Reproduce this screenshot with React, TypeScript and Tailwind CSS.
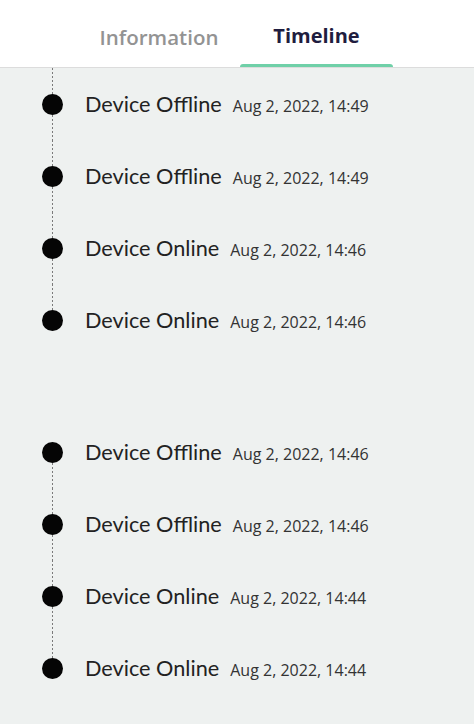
import React from "react";

type Item = { title: string; date: string };

const group1: Item[] = [
  { title: "Device Offline", date: "Aug 2, 2022, 14:49" },
  { title: "Device Offline", date: "Aug 2, 2022, 14:49" },
  { title: "Device Online", date: "Aug 2, 2022, 14:46" },
  { title: "Device Online", date: "Aug 2, 2022, 14:46" },
];
const group2: Item[] = [
  { title: "Device Offline", date: "Aug 2, 2022, 14:46" },
  { title: "Device Offline", date: "Aug 2, 2022, 14:46" },
  { title: "Device Online", date: "Aug 2, 2022, 14:44" },
  { title: "Device Online", date: "Aug 2, 2022, 14:44" },
];

const lineCls =
  "w-px flex-1 bg-[linear-gradient(#7a7a7a_50%,transparent_50%)] bg-[length:1px_4px]";

function Row({ item, top, bottom }: { item: Item; top: boolean; bottom: boolean }) {
  return (
    <div className="flex h-[72px] items-stretch">
      <div className="ml-[42px] flex w-[21px] flex-col items-center">
        <div className={top ? lineCls : "flex-1"} />
        <div className="h-[21px] w-[21px] rounded-full bg-[#050505]" />
        <div className={bottom ? lineCls : "flex-1"} />
      </div>
      <div className="ml-[22px] flex items-center">
        <div className="flex items-baseline gap-[11px]">
          <span className="text-[21.7px] font-normal text-[#222] [font-family:Lato,sans-serif]">{item.title}</span>
          <span className="text-[16px] text-[#333] [font-family:'Open_Sans',sans-serif]">{item.date}</span>
        </div>
      </div>
    </div>
  );
}

export default function App() {
  return (
    <div className="flex h-[724px] w-[474px] flex-col overflow-hidden bg-[#eef1f0]">
      <div className="flex h-[68px] shrink-0 border-b border-[#dcdcdc] bg-white pl-[81px] [font-family:'Open_Sans',sans-serif]">
        <div className="flex w-[156px] items-center justify-center pt-[7px] text-[20.5px] font-semibold text-[#939393]">
          Information
        </div>
        <div className="ml-[3px] flex w-[153px] flex-col">
          <div className="flex flex-1 items-center justify-center pt-[8px] text-[20px] font-bold text-[#1f1d40]">
            Timeline
          </div>
          <div className="h-[3px] rounded-t-sm bg-[#6fd0a8]" />
        </div>
      </div>
      <div className="flex flex-col">
        {group1.map((it, i) => (
          <Row key={"a" + i} item={it} top={true} bottom={i < group1.length - 1} />
        ))}
        <div className="h-[60px]" />
        {group2.map((it, i) => (
          <Row key={"b" + i} item={it} top={i > 0} bottom={i < group2.length - 1} />
        ))}
      </div>
    </div>
  );
}
